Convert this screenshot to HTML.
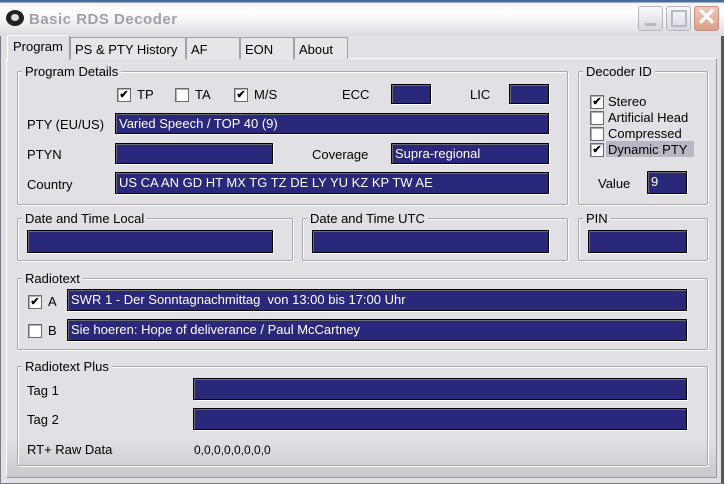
<!DOCTYPE html>
<html><head><meta charset="utf-8"><style>
*{box-sizing:border-box;margin:0;padding:0}
body{width:724px;height:484px;overflow:hidden;background:#dcdce2;font-family:"Liberation Sans",sans-serif;font-size:12px;color:#000;position:relative}
.a{position:absolute}
#win{left:0;top:0;width:724px;height:484px;background:#e0e0e5;border:1px solid #7c7c88;border-right:3px solid #55555f}
#title{left:0;top:0;width:724px;height:36px;background:linear-gradient(#4a6a9a 0,#4a6a9a 2px,#f4f4f6 3px,#ffffff 12px,#e6e6ea 30px,#dadadf 36px)}
.tt{font-weight:bold;color:#a0a0a8;font-size:15px;letter-spacing:0.5px}
.btn{width:25px;height:25px;top:6px;border:1px solid #b4b4bc;border-radius:3px;background:linear-gradient(#fafafa,#d8d8de)}
.tab{top:37px;height:22px;border:1px solid #a0a0a8;border-bottom:none;padding:4px 0 0 4px;background:#e6e6ea;font-size:13px}
#panel{left:6px;top:58px;width:711px;height:420px;border:1px solid #9a9aa2;border-top-color:#fff;border-left-color:#fff;background:linear-gradient(#e0e0e5 0,#e0e0e5 380px,#c8c8cc 420px)}
.g{border:1px solid #a8a8b0;box-shadow:inset 1px 1px 0 #fff,1px 1px 0 #fff;border-radius:2px}
.gl{background:#e0e0e5;padding:0 3px;font-size:13px}
.box{background:#29287a;border:1px solid #000;box-shadow:1px 1px 0 #fff,inset 1px 1px 0 #6a6a70;color:#fff;font-size:13px;padding:2px 0 0 3px;white-space:nowrap;overflow:hidden}
.cb{width:14px;height:14px;background:#fff;border:1px solid #6a6a70;box-shadow:inset 1px 1px 0 #b0b0b0;font-size:11px;line-height:12px;text-align:center;font-weight:bold}
.l{font-size:13px;white-space:nowrap}
</style></head><body>
<div id="win" class="a"></div>
<div id="title" class="a"></div>
<div class="a" style="left:6px;top:10px;width:18px;height:16px;border-radius:50%;background:#222"><div class="a" style="left:5px;top:4px;width:8px;height:7px;border-radius:50%;background:#ddd"></div></div>
<div class="a tt" style="left:29px;top:11px">Basic RDS Decoder</div>
<div class="a btn" style="left:638px"><div class="a" style="left:6px;top:16px;width:11px;height:3px;background:#b8b8c0"></div></div>
<div class="a btn" style="left:666px"><div class="a" style="left:4px;top:3px;width:16px;height:17px;border:2px solid #b8b8c0"></div></div>
<div class="a btn" style="left:694px;background:linear-gradient(#f0c8b8,#d8a088);border-color:#c89080;color:#fff;font-size:24px;line-height:22px;text-align:center;font-weight:bold">✕</div>

<div id="panel" class="a"></div>
<div class="a tab" style="left:70px;width:116px">PS &amp; PTY History</div>
<div class="a tab" style="left:186px;width:54px">AF</div>
<div class="a tab" style="left:240px;width:54px">EON</div>
<div class="a tab" style="left:294px;width:54px">About</div>
<div class="a tab" style="left:7px;top:35px;width:63px;height:25px;background:#e0e0e5;border-color:#fff #9a9aa2 #e0e0e5 #fff;padding:3px 0 0 5px">Program</div>

<!-- Program Details -->
<div class="a g" style="left:17px;top:71px;width:551px;height:134px"></div>
<div class="a gl" style="left:22px;top:64px">Program Details</div>
<div class="a cb" style="left:117px;top:88px">✔</div><div class="a l" style="left:137px;top:87px">TP</div>
<div class="a cb" style="left:175px;top:88px"></div><div class="a l" style="left:195px;top:87px">TA</div>
<div class="a cb" style="left:234px;top:88px">✔</div><div class="a l" style="left:254px;top:87px">M/S</div>
<div class="a l" style="left:342px;top:87px">ECC</div><div class="a box" style="left:391px;top:84px;width:40px;height:20px"></div>
<div class="a l" style="left:470px;top:87px">LIC</div><div class="a box" style="left:509px;top:84px;width:40px;height:20px"></div>
<div class="a l" style="left:27px;top:117px">PTY (EU/US)</div><div class="a box" style="left:115px;top:113px;width:434px;height:21px">Varied Speech / TOP 40 (9)</div>
<div class="a l" style="left:27px;top:147px">PTYN</div><div class="a box" style="left:115px;top:143px;width:158px;height:21px"></div>
<div class="a l" style="left:312px;top:147px">Coverage</div><div class="a box" style="left:391px;top:143px;width:158px;height:21px">Supra-regional</div>
<div class="a l" style="left:27px;top:177px">Country</div><div class="a box" style="left:115px;top:172px;width:434px;height:22px">US CA AN GD HT MX TG TZ DE LY YU KZ KP TW AE</div>

<!-- Decoder ID -->
<div class="a g" style="left:578px;top:71px;width:130px;height:134px"></div>
<div class="a gl" style="left:583px;top:64px">Decoder ID</div>
<div class="a cb" style="left:590px;top:95px">✔</div><div class="a l" style="left:608px;top:94px">Stereo</div>
<div class="a cb" style="left:590px;top:111px"></div><div class="a l" style="left:608px;top:110px">Artificial Head</div>
<div class="a cb" style="left:590px;top:127px"></div><div class="a l" style="left:608px;top:126px">Compressed</div>
<div class="a cb" style="left:590px;top:143px">✔</div><div class="a l" style="left:606px;top:141px;width:88px;height:16px;background:#b8b8c4;padding:1px 0 0 2px">Dynamic PTY</div>
<div class="a l" style="left:598px;top:176px">Value</div><div class="a box" style="left:647px;top:171px;width:40px;height:23px">9</div>

<!-- Date/time -->
<div class="a g" style="left:17px;top:218px;width:276px;height:43px"></div>
<div class="a gl" style="left:22px;top:211px">Date and Time Local</div>
<div class="a box" style="left:27px;top:230px;width:246px;height:23px"></div>
<div class="a g" style="left:302px;top:218px;width:266px;height:43px"></div>
<div class="a gl" style="left:307px;top:211px">Date and Time UTC</div>
<div class="a box" style="left:312px;top:230px;width:237px;height:23px"></div>
<div class="a g" style="left:578px;top:218px;width:130px;height:43px"></div>
<div class="a gl" style="left:583px;top:211px">PIN</div>
<div class="a box" style="left:588px;top:230px;width:99px;height:23px"></div>

<!-- Radiotext -->
<div class="a g" style="left:17px;top:278px;width:691px;height:72px"></div>
<div class="a gl" style="left:22px;top:271px">Radiotext</div>
<div class="a cb" style="left:28px;top:295px">✔</div><div class="a l" style="left:48px;top:294px">A</div>
<div class="a box" style="left:67px;top:289px;width:620px;height:22px">SWR 1 - Der Sonntagnachmittag&nbsp; von 13:00 bis 17:00 Uhr</div>
<div class="a cb" style="left:28px;top:324px"></div><div class="a l" style="left:48px;top:323px">B</div>
<div class="a box" style="left:67px;top:319px;width:620px;height:22px">Sie hoeren: Hope of deliverance / Paul McCartney</div>

<!-- RT+ -->
<div class="a g" style="left:17px;top:366px;width:691px;height:100px"></div>
<div class="a gl" style="left:22px;top:359px">Radiotext Plus</div>
<div class="a l" style="left:27px;top:383px">Tag 1</div><div class="a box" style="left:193px;top:378px;width:494px;height:22px"></div>
<div class="a l" style="left:27px;top:412px">Tag 2</div><div class="a box" style="left:193px;top:408px;width:494px;height:22px"></div>
<div class="a l" style="left:27px;top:442px">RT+ Raw Data</div><div class="a" style="left:194px;top:443px;font-size:12px">0,0,0,0,0,0,0,0</div>
</body></html>
